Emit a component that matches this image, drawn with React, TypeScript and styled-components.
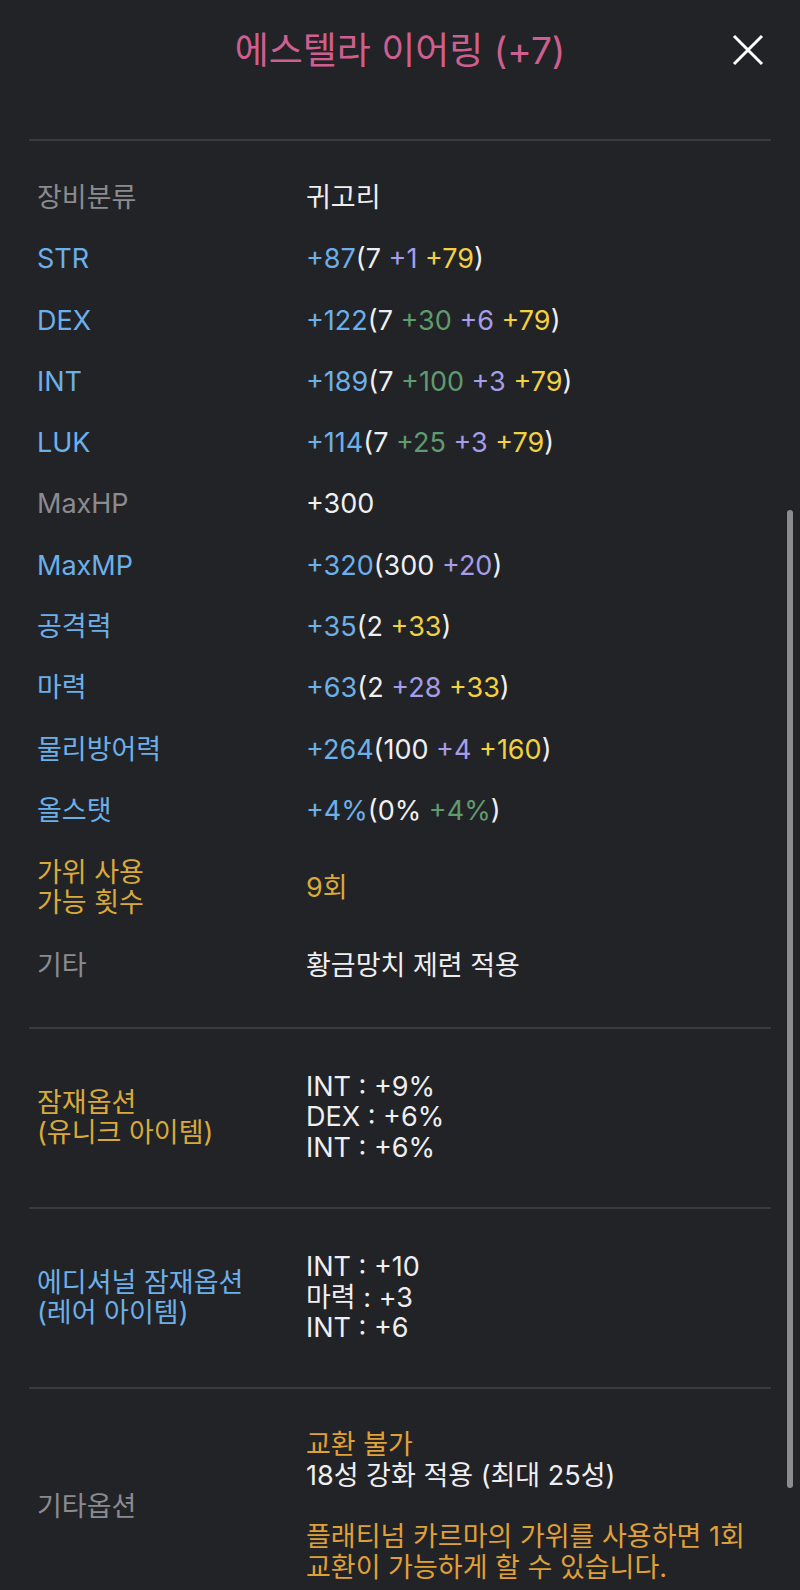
import React from "react";
import styled, { createGlobalStyle } from "styled-components";

const colors: Record<string, string> = {
  white: "#efeff1",
  gray: "#8b8b90",
  blue: "#6cb0ea",
  purple: "#a59de9",
  yellow: "#f1d140",
  green: "#5f9b6e",
  gold: "#d9aa39",
  orange: "#e0a038",
};

type Seg = [string, string];

interface iRow {
  label: string[];
  tone: string;
  value: Seg[];
}

const rows: iRow[] = [
  { label: ["장비분류"], tone: "gray", value: [["귀고리", "white"]] },
  {
    label: ["STR"],
    tone: "blue",
    value: [["+87", "blue"], ["(7 ", "white"], ["+1 ", "purple"], ["+79", "yellow"], [")", "white"]],
  },
  {
    label: ["DEX"],
    tone: "blue",
    value: [["+122", "blue"], ["(7 ", "white"], ["+30 ", "green"], ["+6 ", "purple"], ["+79", "yellow"], [")", "white"]],
  },
  {
    label: ["INT"],
    tone: "blue",
    value: [["+189", "blue"], ["(7 ", "white"], ["+100 ", "green"], ["+3 ", "purple"], ["+79", "yellow"], [")", "white"]],
  },
  {
    label: ["LUK"],
    tone: "blue",
    value: [["+114", "blue"], ["(7 ", "white"], ["+25 ", "green"], ["+3 ", "purple"], ["+79", "yellow"], [")", "white"]],
  },
  { label: ["MaxHP"], tone: "gray", value: [["+300", "white"]] },
  {
    label: ["MaxMP"],
    tone: "blue",
    value: [["+320", "blue"], ["(300 ", "white"], ["+20", "purple"], [")", "white"]],
  },
  {
    label: ["공격력"],
    tone: "blue",
    value: [["+35", "blue"], ["(2 ", "white"], ["+33", "yellow"], [")", "white"]],
  },
  {
    label: ["마력"],
    tone: "blue",
    value: [["+63", "blue"], ["(2 ", "white"], ["+28 ", "purple"], ["+33", "yellow"], [")", "white"]],
  },
  {
    label: ["물리방어력"],
    tone: "blue",
    value: [["+264", "blue"], ["(100 ", "white"], ["+4 ", "purple"], ["+160", "yellow"], [")", "white"]],
  },
  {
    label: ["올스탯"],
    tone: "blue",
    value: [["+4%", "blue"], ["(0% ", "white"], ["+4%", "green"], [")", "white"]],
  },
  { label: ["가위 사용", "가능 횟수"], tone: "gold", value: [["9회", "gold"]] },
  { label: ["기타"], tone: "gray", value: [["황금망치 제련 적용", "white"]] },
];

const App: React.FC = () => {
  return (
    <Page>
      <GlobalStyle />
      <Header>
        <span />
        <Title>에스텔라 이어링 (+7)</Title>
        <Close aria-label="닫기">
          <svg width="32" height="32" viewBox="0 0 32 32">
            <path d="M2 2 L30 30 M30 2 L2 30" stroke="#ffffff" strokeWidth="3" fill="none" />
          </svg>
        </Close>
      </Header>

      <Divider />

      <StatSection>
        {rows.map((r) => (
          <Row key={r.label.join("")} tall={r.label.length > 1}>
            <Label tone={r.tone}>
              {r.label.map((l) => (
                <div key={l}>{l}</div>
              ))}
            </Label>
            <Value>
              {r.value.map(([t, c], i) => (
                <Part key={i} tone={c}>
                  {t}
                </Part>
              ))}
            </Value>
          </Row>
        ))}
      </StatSection>

      <Divider />

      <OptionSection>
        <OptionLabel tone="gold">
          <div>잠재옵션</div>
          <div>(유니크 아이템)</div>
        </OptionLabel>
        <OptionList>
          <div>INT : +9%</div>
          <div>DEX : +6%</div>
          <div>INT : +6%</div>
        </OptionList>
      </OptionSection>

      <Divider />

      <OptionSection>
        <OptionLabel tone="blue">
          <div>에디셔널 잠재옵션</div>
          <div>(레어 아이템)</div>
        </OptionLabel>
        <OptionList>
          <div>INT : +10</div>
          <div>마력 : +3</div>
          <div>INT : +6</div>
        </OptionList>
      </OptionSection>

      <Divider />

      <OptionSection last>
        <OptionLabel tone="gray">기타옵션</OptionLabel>
        <OptionList>
          <Part tone="orange">교환 불가</Part>
          <div>18성 강화 적용 (최대 25성)</div>
          <Note>플래티넘 카르마의 가위를 사용하면 1회 교환이 가능하게 할 수 있습니다.</Note>
        </OptionList>
      </OptionSection>

      <ScrollThumb />
    </Page>
  );
};

export default App;

const GlobalStyle = createGlobalStyle`
  html, body {
    margin: 0;
    padding: 0;
    background: #222327;
    overflow: hidden;
  }
  body {
    font-family: "Inter", "Noto Sans CJK KR", sans-serif;
    font-size: 27px;
    color: ${colors.white};
    word-break: keep-all;
  }
`;

const Page = styled.div`
  position: relative;
  width: 800px;
  height: 1590px;
  overflow: hidden;
  background: #222327;
`;

const Header = styled.div`
  display: grid;
  grid-template-columns: 1fr auto 1fr;
  align-items: center;
  height: 100px;
  margin-bottom: 39px;
`;

const Title = styled.h1`
  margin: 0;
  font-size: 37px;
  font-weight: 400;
  color: #cf5f8e;
  line-height: 1;
`;

const Close = styled.button`
  justify-self: end;
  margin-right: 36px;
  padding: 0;
  border: 0;
  background: none;
  display: flex;
  width: 32px;
  height: 32px;
`;

const Divider = styled.hr`
  margin: 0 29px;
  border: 0;
  height: 2px;
  background: #393a40;
`;

const StatSection = styled.div`
  padding: 26px 0 30px;
`;

const Row = styled.div<{ tall: boolean }>`
  display: grid;
  grid-template-columns: 269px 1fr;
  align-items: center;
  padding: ${({ tall }) => (tall ? "17px 29px 17px 37px" : "16px 29px 16px 37px")};
  line-height: ${({ tall }) => (tall ? "30px" : "29.3px")};
`;

const Label = styled.div<{ tone: string }>`
  color: ${({ tone }) => colors[tone]};
`;

const Value = styled.div`
  white-space: nowrap;
`;

const Part = styled.span<{ tone: string }>`
  color: ${({ tone }) => colors[tone]};
  white-space: pre;
`;

const OptionSection = styled.div<{ last?: boolean }>`
  display: grid;
  grid-template-columns: 269px 1fr;
  align-items: center;
  padding: ${({ last }) => (last ? "41px 29px 44px 37px" : "43px 29px 43px 37px")};
`;

const OptionLabel = styled.div<{ tone: string }>`
  color: ${({ tone }) => colors[tone]};
  line-height: 30px;
`;

const OptionList = styled.div`
  display: flex;
  flex-direction: column;
  line-height: 30.75px;
  color: ${colors.white};
`;

const Note = styled.div`
  margin-top: 30.75px;
  color: ${colors.orange};
`;

const ScrollThumb = styled.div`
  position: absolute;
  top: 510px;
  right: 7px;
  width: 6px;
  height: 978px;
  border-radius: 3px;
  background: #8b8b90;
`;
